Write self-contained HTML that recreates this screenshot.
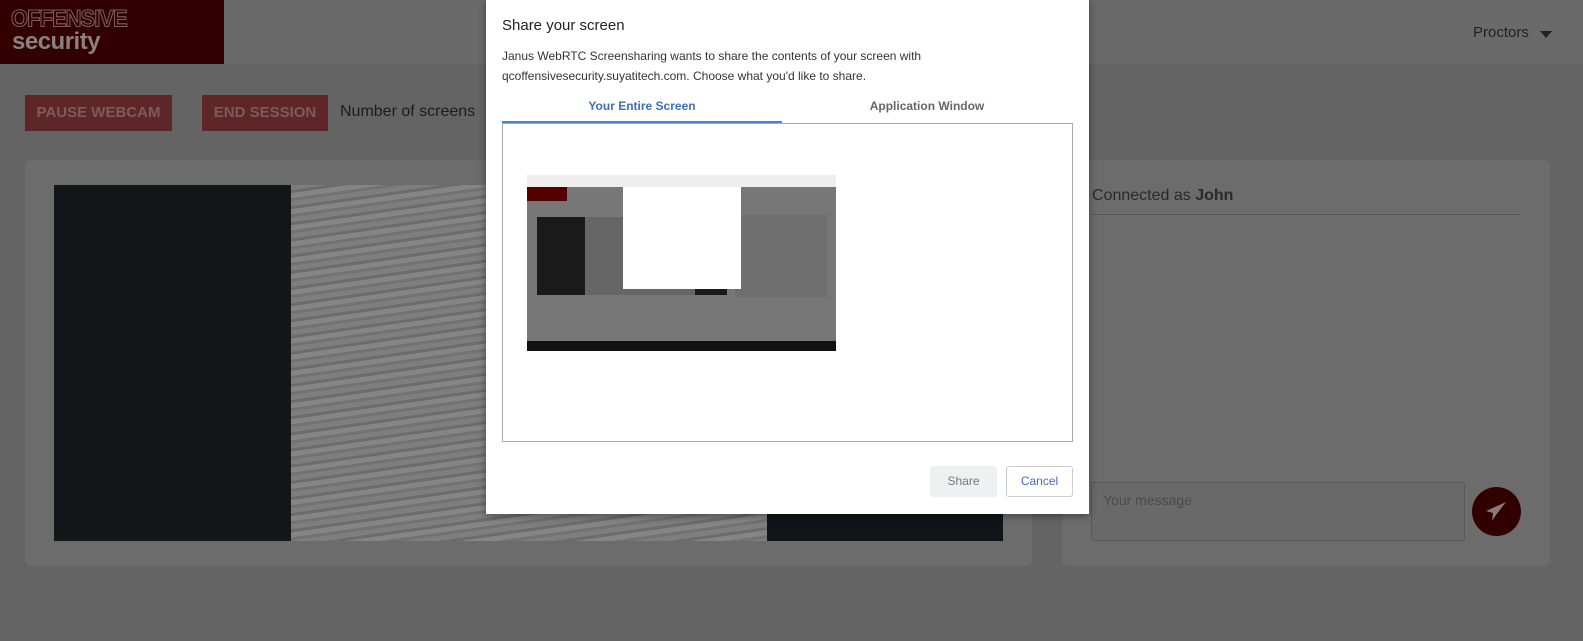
<!DOCTYPE html>
<html><head><meta charset="utf-8"><style>
*{margin:0;padding:0;box-sizing:border-box}
body{width:1583px;height:641px;overflow:hidden;background:#646464;font-family:"Liberation Sans",sans-serif;position:relative}
.a{position:absolute}
.btn{background:#5e2626;color:#7e5a5a;font-size:15px;font-weight:bold;text-align:center;line-height:36px}
</style></head><body>
<div class="a" style="left:0;top:0;width:1583px;height:64px;background:#6a6a6a"></div>
<div class="a" style="left:0;top:0;width:224px;height:64px;background:#330000">
 <div class="a" style="left:11px;top:6px;font:bold 22px 'Liberation Sans';color:transparent;-webkit-text-stroke:1px #7a6060;letter-spacing:-1px;transform:scaleY(1.1)">OFFENSIVE</div>
 <div class="a" style="left:12px;top:28px;font:900 24px 'Liberation Sans';color:#8a8080;letter-spacing:-0.5px">security</div>
</div>
<div class="a" style="left:1473px;top:24px;font-size:15px;color:#222">Proctors</div>
<div class="a" style="left:1540px;top:31px;width:0;height:0;border-left:6px solid transparent;border-right:6px solid transparent;border-top:7px solid #222"></div>
<div class="a btn" style="left:25px;top:95px;width:147px;height:36px">PAUSE WEBCAM</div>
<div class="a btn" style="left:202px;top:95px;width:126px;height:36px">END SESSION</div>
<div class="a" style="left:340px;top:103px;font-size:16px;color:#1c1c1c">Number of screens</div>
<div class="a" style="left:25px;top:160px;width:1007px;height:406px;background:#6c6c6c;border-radius:6px"></div>
<div class="a" style="left:54px;top:185px;width:237px;height:356px;background:#14161a"></div>
<div class="a" style="left:291px;top:185px;width:476px;height:356px;background:repeating-linear-gradient(172deg,#7e7e7e 0 5px,#6c6c6c 5px 8px,#858585 8px 13px,#727272 13px 16px)"></div>
<div class="a" style="left:767px;top:185px;width:236px;height:356px;background:#121317"></div>
<div class="a" style="left:1062px;top:160px;width:488px;height:406px;background:#6c6c6c;border-radius:6px"></div>
<div class="a" style="left:1092px;top:187px;font-size:16px;color:#2a2a2a">Connected as <b>John</b></div>
<div class="a" style="left:1091px;top:214px;width:429px;height:1px;background:#555"></div>
<div class="a" style="left:1091px;top:482px;width:374px;height:59px;border:1px solid #5a5a5a;border-radius:3px;background:#696969"></div>
<div class="a" style="left:1103px;top:492px;font-size:14px;color:#4a4a4a">Your message</div>
<div class="a" style="left:1472px;top:487px;width:49px;height:49px;border-radius:50%;background:#330000"></div>
<svg class="a" style="left:1483px;top:499px" width="26" height="26" viewBox="0 0 26 26"><path d="M23 3 L3 12 L10 14 L9 22 L13 16 Z" fill="#8a7a7a"/></svg>
<div class="a" style="left:486px;top:0;width:603px;height:514px;background:#fff;box-shadow:0 2px 8px rgba(0,0,0,.4)">
 <div class="a" style="left:16px;top:17px;font-size:15px;color:#222">Share your screen</div>
 <div class="a" style="left:16px;top:46px;font-size:12px;color:#333;line-height:20px">Janus WebRTC Screensharing wants to share the contents of your screen with<br>qcoffensivesecurity.suyatitech.com. Choose what you'd like to share.</div>
 <div class="a" style="left:16px;top:99px;width:280px;text-align:center;font-size:12px;font-weight:bold;color:#3b6fc2">Your Entire Screen</div>
 <div class="a" style="left:296px;top:99px;width:290px;text-align:center;font-size:12px;font-weight:bold;color:#666">Application Window</div>
 <div class="a" style="left:16px;top:123px;width:571px;height:319px;border:1px solid #aaa"></div>
 <div class="a" style="left:16px;top:121px;width:280px;height:2px;background:#4a7fd6"></div>
 <div class="a" style="left:41px;top:175px;width:309px;height:176px;background:#777">
  <div class="a" style="left:0;top:0;width:309px;height:12px;background:#eee"></div>
  <div class="a" style="left:0;top:12px;width:309px;height:14px;background:#777"></div>
  <div class="a" style="left:0;top:12px;width:40px;height:14px;background:#500"></div>
  <div class="a" style="left:10px;top:42px;width:190px;height:78px;background:#1a1a1a"></div>
  <div class="a" style="left:58px;top:42px;width:110px;height:78px;background:#666"></div>
  <div class="a" style="left:208px;top:40px;width:92px;height:82px;background:#6e6e6e"></div>
  <div class="a" style="left:96px;top:12px;width:118px;height:102px;background:#fff"></div>
  <div class="a" style="left:0;top:166px;width:309px;height:10px;background:#111"></div>
 </div>
 <div class="a" style="left:444px;top:466px;width:67px;height:31px;background:#eef0f2;border-radius:3px;text-align:center;line-height:31px;font-size:12px;color:#777">Share</div>
 <div class="a" style="left:520px;top:466px;width:67px;height:31px;border:1px solid #ccc;border-radius:3px;text-align:center;line-height:29px;font-size:12px;color:#3b6fc2">Cancel</div>
</div>
</body></html>
